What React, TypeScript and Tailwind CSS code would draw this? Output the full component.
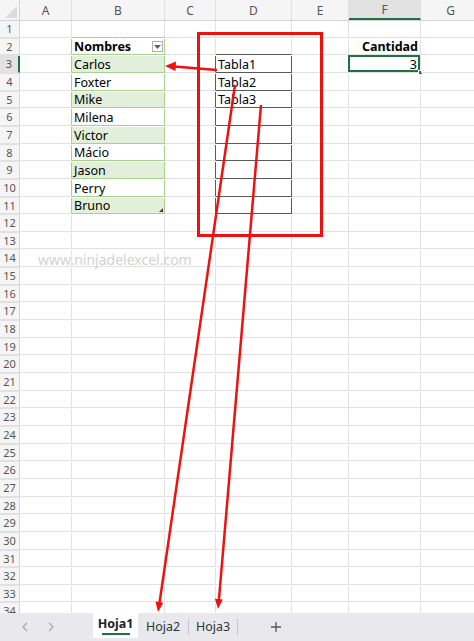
import React from 'react';

const COLS = ['A', 'B', 'C', 'D', 'E', 'F', 'G'];
const NAMES = ['Carlos', 'Foxter', 'Mike', 'Milena', 'Victor', 'Mácio', 'Jason', 'Perry', 'Bruno'];
const GRID = 'grid grid-rows-1 grid-cols-[20px_52px_93px_51px_76px_57px_72px_60px]';

// rows alternate 17/18px so they average ~17.65px like the screenshot
function rowHeight(r: number) {
  const h = Math.round(r * 17.65) - Math.round((r - 1) * 17.65);
  return h === 18 ? 'h-[18px]' : 'h-[17px]';
}

function rightBorder(r: number, c: number) {
  if ((c === 0 || c === 1) && r >= 2 && r <= 11) return 'border-r-[#a9d08e]';
  if ((c === 2 || c === 3) && r >= 3 && r <= 11) return 'border-r-[#5a5a5a]';
  return 'border-r-[#e1e1e1]';
}

function bottomBorder(r: number, c: number) {
  if (c === 1 && r >= 1 && r <= 11) return 'border-b-[#a9d08e]';
  if (c === 3 && r >= 2 && r <= 11) return 'border-b-[#5a5a5a]';
  return 'border-b-[#e1e1e1]';
}

function Cell({ r, c }: { r: number; c: number }) {
  const banded = c === 1 && r >= 3 && r <= 11 && r % 2 === 1;
  const bg = banded ? 'bg-[#e2efda]' : 'bg-white';
  let content: React.ReactNode = null;

  if (c === 1 && r === 2) {
    content = (
      <div className="flex items-center justify-between h-full pl-[2px] pr-[1px]">
        <span className="font-bold text-[12.5px] text-black">Nombres</span>
        <span className="w-[11px] h-[11px] border border-[#b0b0b0] bg-white flex items-center justify-center">
          <svg width="7" height="4" viewBox="0 0 7 4"><path d="M0 0h7L3.5 4z" fill="#606060" /></svg>
        </span>
      </div>
    );
  } else if (c === 1 && r >= 3 && r <= 11) {
    content = (
      <div className="flex items-center h-full pl-[2px] text-[12.5px] text-black">{NAMES[r - 3]}</div>
    );
  } else if (c === 3 && r >= 3 && r <= 5) {
    content = (
      <div className="flex items-center h-full pl-[2px] text-[12.5px] text-black">{'Tabla' + (r - 2)}</div>
    );
  } else if (c === 5 && r === 2) {
    content = (
      <div className="flex items-center justify-end h-full pr-[2px] font-bold text-[12.5px] text-black">Cantidad</div>
    );
  } else if (c === 5 && r === 3) {
    content = (
      <div className="flex items-center justify-end h-full pr-[3px] text-[12.5px] text-black">3</div>
    );
  }

  return (
    <div className={`relative min-h-0 leading-[15px] border-r border-b ${rightBorder(r, c)} ${bottomBorder(r, c)} ${bg}`}>
      {content}
      {c === 1 && r === 11 && (
        <svg className="absolute right-[1px] bottom-[1px]" width="4" height="4" viewBox="0 0 4 4">
          <path d="M4 0V4H0z" fill="#404040" />
        </svg>
      )}
      {c === 5 && r === 3 && (
        <>
          <div className="absolute -left-[1px] -top-[1px] right-0 bottom-0 border-2 border-[#1e7145]" />
          <div className="absolute -right-[3px] -bottom-[3px] w-[5px] h-[5px] bg-[#1e7145] border border-white" />
        </>
      )}
    </div>
  );
}

function Row({ r }: { r: number }) {
  const selected = r === 3;
  return (
    <div className={`${GRID} ${rowHeight(r)} shrink-0`}>
      <div
        className={`flex items-center justify-center min-h-0 leading-[14px] text-[11px] text-[#555] border-b border-b-[#e1e1e1] ${
          selected ? 'bg-[#e2e2e2] border-r-2 border-r-[#1e7145]' : 'bg-[#f5f5f5] border-r border-r-[#d4d4d4]'
        }`}
      >
        {r}
      </div>
      {COLS.map((_, c) => (
        <Cell key={c} r={r} c={c} />
      ))}
      <Cell r={r} c={7} />
    </div>
  );
}

export default function App() {
  const rows = Array.from({ length: 34 }, (_, i) => i + 1);
  return (
    <div className="relative w-[474px] h-[641px] overflow-hidden bg-white flex flex-col font-['Noto_Sans','Open_Sans',sans-serif]">
      {/* column headers */}
      <div className={`${GRID} h-[21px] shrink-0 bg-[#f5f5f5] border-b border-[#d4d4d4]`}>
        <div className="relative border-r border-[#d4d4d4]">
          <svg className="absolute right-[2px] bottom-[2px]" width="12" height="12" viewBox="0 0 12 12">
            <path d="M12 0V12H0z" fill="#dcdcdc" />
          </svg>
        </div>
        {COLS.map((l, i) => (
          <div
            key={l}
            className={`flex items-center justify-center pt-[2px] text-[12px] text-[#555] border-r border-[#e1e1e1] ${
              i === 5 ? 'bg-[#e2e2e2] border-b-2 border-b-[#1e7145]' : ''
            }`}
          >
            {l}
          </div>
        ))}
        <div />
      </div>

      {/* sheet body */}
      <div className="flex-1 overflow-hidden flex flex-col">
        {rows.map((r) => (
          <Row key={r} r={r} />
        ))}
      </div>

      {/* sheet tabs */}
      <div className="h-[28px] shrink-0 bg-[#e9e9ed] flex items-stretch text-[12.5px] text-[#333]">
        <div className="w-[93px] flex items-center pl-[20px] gap-[16px]">
          <svg width="10" height="12" viewBox="0 0 10 12"><path d="M7 2L3 6l4 4" fill="none" stroke="#a8a8a8" strokeWidth="1.3" /></svg>
          <svg width="10" height="12" viewBox="0 0 10 12"><path d="M3 2l4 4-4 4" fill="none" stroke="#a8a8a8" strokeWidth="1.3" /></svg>
        </div>
        <div className="w-[45px] bg-white flex flex-col items-center justify-center mb-[3px]">
          <span className="font-bold text-[#222] leading-[16px]">Hoja1</span>
          <span className="w-[28px] h-[2px] bg-[#1e7145] mt-[1px]" />
        </div>
        <div className="w-[50px] flex items-center justify-center">Hoja2</div>
        <div className="my-[6px] w-px bg-[#c8c8c8]" />
        <div className="w-[48px] flex items-center justify-center">Hoja3</div>
        <div className="my-[6px] w-px bg-[#c8c8c8]" />
        <div className="w-[76px] flex items-center justify-center">
          <svg width="12" height="12" viewBox="0 0 12 12"><path d="M6 1v10M1 6h10" stroke="#555" strokeWidth="1.3" /></svg>
        </div>
      </div>

      {/* watermark */}
      <div className="absolute left-[38px] top-[249px] text-[14px] text-[#d2d2d2] pointer-events-none">
        www.ninjadelexcel.com
      </div>

      {/* red annotations */}
      <svg className="absolute inset-0 pointer-events-none" width="474" height="641" viewBox="0 0 474 641">
        <rect x="198.5" y="33.5" width="123" height="202" fill="none" stroke="#ee1111" strokeWidth="3" />
        <line x1="217" y1="70" x2="174" y2="66.5" stroke="#ee1111" strokeWidth="2.5" />
        <polygon points="165,66 176,61.5 175.5,71" fill="#ee1111" />
        <line x1="235" y1="85" x2="159.5" y2="603" stroke="#ee1111" strokeWidth="2.5" />
        <polygon points="158,612 163.4,602.7 155.5,601.5" fill="#ee1111" />
        <line x1="261" y1="105" x2="218.9" y2="600" stroke="#ee1111" strokeWidth="2.5" />
        <polygon points="218,609 222.8,599.4 214.9,598.7" fill="#ee1111" />
      </svg>
    </div>
  );
}
